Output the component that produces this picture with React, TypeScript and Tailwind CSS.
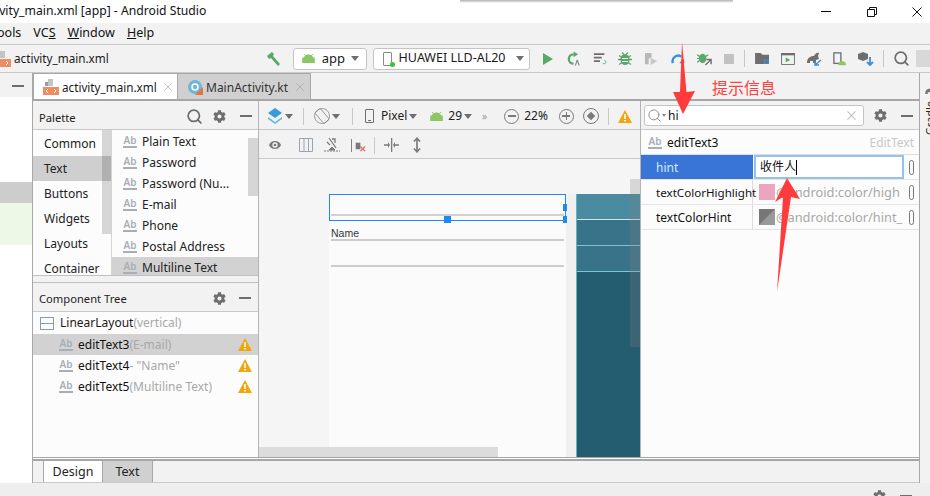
import { FaCog } from "react-icons/fa";
import { Search, Eye, MoveVertical } from "lucide-react";

const palette = ["Plain Text", "Password", "Password (Nu...", "E-mail", "Phone", "Postal Address", "Multiline Text"];
const groups = ["Common", "Text", "Buttons", "Widgets", "Layouts", "Container"];

const AbIcon = () => (
  <span className="flex w-[14px] shrink-0 flex-col items-center border-b-2 border-[#a7aeb8] text-[10px] leading-[11px] font-semibold text-[#a7aeb8]">
    Ab
  </span>
);

const Droid = ({ className = "" }: { className?: string }) => (
  <svg viewBox="0 0 14 10" className={className} fill="#8cc665">
    <path d="M0 4h14v6H0zM2 4c0-2 2-3.500 5-3.500S12 2 12 4z" />
    <path d="M2 0l2 2M12 0l-2 2" stroke="#8cc665" strokeWidth="1" />
  </svg>
);

const Caret = () => <span className="ml-[2px] h-0 w-0 border-x-[4px] border-t-[5px] border-x-transparent border-t-[#6e6e6e]" />;

const Cross = ({ className = "", color = "#c0c0c0", width = 1.2 }: { className?: string; color?: string; width?: number }) => (
  <svg viewBox="0 0 10 10" className={className} fill="none" stroke={color} strokeWidth={width}>
    <path d="M.500.500l9 9M9.500.500l-9 9" />
  </svg>
);

const Warn = ({ className = "" }: { className?: string }) => (
  <svg viewBox="0 0 14 13" className={`h-[13px] w-[14px] shrink-0 ${className}`}>
    <path d="M7 0l7 13H0z" fill="#f2a60d" />
    <path d="M6.200 4h1.600v5H6.200zM6.200 10h1.600v1.600H6.200z" fill="#fff" />
  </svg>
);

const Gear = () => <FaCog className="h-[13px] w-[13px] text-[#6e6e6e]" />;
const Dash = () => <span className="h-[2px] w-[12px] bg-[#6e6e6e]" />;

const XmlIcon = ({ className = "" }: { className?: string }) => (
  <svg viewBox="0 0 16 16" className={`h-[16px] w-[16px] shrink-0 ${className}`}>
    <path d="M5 0h5v7H5z" fill="#c4c4c4" />
    <path d="M2 3h3v4H2z" fill="#9c9c9c" />
    <path d="M0 8h16v8H0z" fill="#f08c62" />
    <path d="M5 10l-2 2 2 2M11 10l2 2-2 2" stroke="#fff" fill="none" />
  </svg>
);

const TopToolbar = () => (
  <div className="flex h-[29px] items-center border-y border-[#c9c9c9] bg-[#f2f2f2] text-[12px] text-[#1a1a1a]">
    <XmlIcon className="ml-[-5px]" />
    <span className="ml-[3px] w-[95px] text-[11.700px]">activity_main.xml</span>
    <svg viewBox="0 0 16 16" className="ml-[157px] h-[16px] w-[16px]">
      <path d="M1 5l5-4 2 2-1 2 7 8-2 2-7-8-2 1z" fill="#59a869" />
    </svg>
    <div className="ml-[11px] flex h-[22px] w-[74px] items-center rounded-[3px] border border-[#c4c4c4] bg-white pl-[8px]">
      <Droid className="h-[9px] w-[13px]" />
      <span className="ml-[7px] text-[13px]">app</span>
      <span className="ml-[4px] flex"><Caret /></span>
    </div>
    <div className="ml-[6px] flex h-[22px] w-[158px] items-center rounded-[3px] border border-[#c4c4c4] bg-white pl-[9px] whitespace-nowrap">
      <span className="relative h-[14px] w-[9px] rounded-[1px] border border-[#8a8a8a]">
        <span className="absolute top-[9px] left-[6px] h-[5px] w-[5px] rounded-full bg-[#3bc43b]" />
      </span>
      <span className="ml-[7px] text-[12.500px]">HUAWEI LLD-AL20</span>
      <span className="ml-[8px] flex"><Caret /></span>
    </div>
    <div className="ml-[12px] flex items-center gap-[11.700px]">
      <svg viewBox="0 0 12 14" className="h-[14px] w-[12px]"><path d="M1 1l10 6-10 6z" fill="#59a869" /></svg>
      <svg viewBox="0 0 16 16" className="h-[16px] w-[15px]"><path d="M8 3a5 5 0 1 0 0 10" stroke="#59a869" strokeWidth="2.500" fill="none" /><path d="M8 0l5 3-5 3z" fill="#59a869" /><path d="M10 15l2-6 2 6" stroke="#6e6e6e" fill="none" /></svg>
      <svg viewBox="0 0 16 16" className="h-[15px] w-[14px]"><path d="M1 2h12v2H1zM1 6h9v2H1zM1 10h7v2H1z" fill="#6e6e6e" /><path d="M11 13a2 2 0 1 0 2-3" stroke="#59a869" fill="none" /></svg>
      <svg viewBox="0 0 14 14" className="h-[15px] w-[14px]"><ellipse cx="7" cy="8" rx="4.500" ry="5.500" fill="#59a869" /><path d="M1 4l3 2M13 4l-3 2M0 8h3M14 8h-3M1 13l3-2M13 13l-3-2M4 1l2 2M10 1L8 3" stroke="#59a869" strokeWidth="1.300" /><path d="M4 7h6M4 10h6" stroke="#fff" /></svg>
      <svg viewBox="0 0 16 16" className="h-[15px] w-[15px]"><path d="M1 2h7v5l-3 1v6H1z" fill="#b8b8b8" /><path d="M7 7l7 4-7 4z" fill="#c8c8c8" /></svg>
      <svg viewBox="0 0 16 16" className="h-[15px] w-[15px]"><path d="M2 13a6 6 0 0 1 9-7" stroke="#3a8fd6" strokeWidth="2.500" fill="none" /><path d="M14 13a6 6 0 0 0-1-5l-4 5z" fill="#6e6e6e" /></svg>
      <svg viewBox="0 0 16 16" className="h-[15px] w-[15px]"><ellipse cx="6" cy="8" rx="4" ry="5" fill="#59a869" /><path d="M0 4l3 2M0 8h3M0 12l3-2M12 4l-3 2" stroke="#59a869" strokeWidth="1.300" /><path d="M9 15l5-5M10 9h5v5" stroke="#6e6e6e" strokeWidth="1.500" fill="none" /></svg>
      <span className="h-[10px] w-[10px] bg-[#c2c2c2]" />
    </div>
    <span className="mx-[10px] h-[17px] w-px bg-[#c8c8c8]" />
    <div className="flex items-center gap-[11px]">
      <svg viewBox="0 0 16 14" className="h-[13px] w-[15px]"><path d="M0 1h6l2 2h7v10H0z" fill="#6e6e6e" /><path d="M9 8h3v2H9zM13 8h2v2h-2zM9 11h3v2H9zM13 11h2v2h-2z" fill="#3a8fd6" /></svg>
      <svg viewBox="0 0 15 13" className="h-[12px] w-[14px]"><path d="M.500.500h14v12H.500z" fill="none" stroke="#6e6e6e" /><path d="M0 0h15v2.500H0z" fill="#6e6e6e" /><path d="M5 5l5 2.500L5 10z" fill="#59a869" /></svg>
      <svg viewBox="0 0 16 16" className="h-[16px] w-[16px]"><path d="M1 12c0-5 3-7 7-7 1-2 3-4 5-3l-1 3 1 3-3 1v3H7v-2H4v2z" fill="#6e6e6e" /><path d="M15 9l-6 5M9 10v4h4" stroke="#3a8fd6" strokeWidth="1.500" fill="none" /></svg>
      <svg viewBox="0 0 16 16" className="h-[16px] w-[14px]"><rect x="1" y="1" width="8" height="12" fill="none" stroke="#6e6e6e" strokeWidth="1.500" /><path d="M6 15a4.500 4.500 0 0 1 9 0z" fill="#8cc665" /></svg>
      <svg viewBox="0 0 16 16" className="h-[16px] w-[16px]"><path d="M5 1l5 2v5l-5 2-5-2V3z" fill="#6e6e6e" /><path d="M12 6v8M9 11l3 3 3-3" stroke="#3a8fd6" strokeWidth="1.800" fill="none" /></svg>
    </div>
    <span className="mx-[9px] h-[17px] w-px bg-[#c8c8c8]" />
    <Search className="h-[17px] w-[17px] text-[#6e6e6e]" strokeWidth={2.500} />
    <span className="ml-[6px] h-[17px] w-[14px] bg-[#d8d8d8]" />
  </div>
);

const EditorTabs = () => (
  <div className="flex h-[28px] border-b-2 border-[#a6a6a6] bg-[#f2f2f2] text-[12px]">
    <div className="flex h-[26px] w-[145px] items-center border-x border-t border-[#a8a8a8] bg-white pl-[9px] text-[#1a1a1a]">
      <XmlIcon />
      <span className="ml-[3px] w-[95px] pt-[2px] text-[11.700px]">activity_main.xml</span>
      <Cross className="ml-[7px] h-[8px] w-[8px]" />
    </div>
    <div className="flex h-[26px] w-[133px] items-center border-t border-r border-[#a8a8a8] bg-[#d0d0d0] pl-[9px] text-[#333]">
      <svg viewBox="0 0 16 16" className="h-[16px] w-[16px]">
        <circle cx="8" cy="8" r="7" fill="#6fb5d6" />
        <circle cx="8" cy="8" r="3" fill="none" stroke="#fff" strokeWidth="1.500" />
        <path d="M8 16l8-8v8z" fill="#e8743b" />
      </svg>
      <span className="ml-[3px] pt-[2px]">MainActivity.kt</span>
      <Cross className="ml-[8px] h-[8px] w-[8px]" color="#b0b0b0" />
    </div>
  </div>
);

const PalettePanel = () => (
  <div className="flex h-[175px] flex-col border-b border-[#c0c0c0]">
    <div className="flex h-[29px] shrink-0 items-center border-b border-[#c9c9c9] bg-[#f2f2f2] pt-[2px] pl-[6px]">
      <span className="mt-[4px] text-[11.200px]">Palette</span>
      <Search className="ml-[110px] h-[17px] w-[17px] text-[#6e6e6e]" strokeWidth={2.500} />
      <span className="ml-[10px] flex"><Gear /></span>
      <span className="ml-[14px] flex"><Dash /></span>
    </div>
    <div className="flex min-h-0 flex-1 bg-[#fcfcfc]">
      <div className="relative w-[79px] shrink-0 overflow-hidden border-r border-[#d4d4d4] pt-[1px]">
        {groups.map((g) => (
          <div key={g} className={`flex h-[25px] items-center pl-[11px] ${g === "Text" ? "bg-[#cfcfcf]" : ""}`}>
            {g}
          </div>
        ))}
        <span className="absolute top-0 right-0 h-[104px] w-[9px] bg-black/15" />
      </div>
      <div className="relative min-w-0 flex-1 overflow-hidden pt-[1px]">
        {palette.map((p) => (
          <div key={p} className={`flex h-[21px] items-center gap-[5px] pl-[11px] ${p === "Multiline Text" ? "bg-[#d2d2d2]" : ""}`}>
            <AbIcon />
            <span className="pt-[1px]">{p}</span>
          </div>
        ))}
        <span className="absolute top-[8px] right-0 h-[58px] w-[10px] bg-black/15" />
      </div>
    </div>
  </div>
);

const TreePanel = () => (
  <div className="flex min-h-0 flex-1 flex-col">
    <div className="h-[7px] shrink-0 border-b border-[#c0c0c0] bg-[#f2f2f2]" />
    <div className="flex h-[29px] shrink-0 items-center border-b border-[#c9c9c9] bg-[#f2f2f2] pt-[2px] pl-[6px]">
      <span className="mt-[3px] text-[11.200px]">Component Tree</span>
      <span className="ml-[86px] flex"><Gear /></span>
      <span className="ml-[13px] flex"><Dash /></span>
    </div>
    <div className="flex-1 bg-[#fcfcfc]">
      <div className="flex h-[22px] items-center pl-[7px]">
        <span className="flex h-[13px] w-[14px] flex-col justify-center border border-[#8a9bb0]"><span className="h-px bg-[#8a9bb0]" /></span>
        <span className="ml-[6px] text-[#1a1a1a]">LinearLayout</span>
        <span className="text-[#a8a8a8]">(vertical)</span>
      </div>
      {[
        { id: "editText3", rest: "(E-mail)" },
        { id: "editText4", rest: '- "Name"' },
        { id: "editText5", rest: "(Multiline Text)" },
      ].map((r) => (
        <div key={r.id} className={`flex h-[21px] items-center pl-[26px] ${r.id === "editText3" ? "bg-[#d2d2d2]" : ""}`}>
          <AbIcon />
          <span className="ml-[5px] text-[#111]">{r.id}</span>
          <span className="text-[#a8a8a8]">{r.rest}</span>
          <Warn className="mr-[6px] ml-auto" />
        </div>
      ))}
    </div>
  </div>
);

const DesignToolbar = () => (
  <>
    <div className="flex h-[29px] shrink-0 items-center border-b border-[#c9c9c9] bg-[#f2f2f2] pt-[2px] pl-[8px]">
      <svg viewBox="0 0 16 16" className="h-[16px] w-[16px]">
        <path d="M8 0l7 5-7 5-7-5z" fill="#3a9ad9" />
        <path d="M1 9l7 5 7-5v2l-7 5-7-5z" fill="#6cb5e3" />
      </svg>
      <Caret />
      <span className="mx-[10px] h-[17px] w-px bg-[#c8c8c8]" />
      <svg viewBox="0 0 16 16" className="h-[16px] w-[16px]" fill="none" stroke="#8a8a8a" strokeWidth="0.800">
        <circle cx="8" cy="8" r="7.500" />
        <rect x="4.500" y="1" width="7" height="14" rx="1" transform="rotate(-40 8 8)" />
      </svg>
      <Caret />
      <span className="mx-[12px] h-[17px] w-px bg-[#c8c8c8]" />
      <span className="flex h-[14px] w-[9px] items-end justify-center rounded-[1px] border border-[#6e6e6e] pb-px"><span className="h-px w-[3px] bg-[#6e6e6e]" /></span>
      <span className="ml-[7px]">Pixel</span>
      <Caret />
      <Droid className="ml-[13px] h-[9px] w-[13px]" />
      <span className="ml-[5px]">29</span>
      <Caret />
      <span className="ml-[10px] text-[10px] text-[#999]">»</span>
      <span className="ml-[17px] flex h-[15px] w-[15px] items-center justify-center rounded-full border-[1.500px] border-[#7a7a7a]"><span className="h-[1.500px] w-[8px] bg-[#7a7a7a]" /></span>
      <span className="ml-[5px]">22%</span>
      <span className="relative ml-[11px] flex h-[15px] w-[15px] items-center justify-center rounded-full border-[1.500px] border-[#7a7a7a]">
        <span className="h-[1.500px] w-[8px] bg-[#7a7a7a]" />
        <span className="absolute h-[8px] w-[1.500px] bg-[#7a7a7a]" />
      </span>
      <span className="ml-[9px] flex h-[16px] w-[16px] items-center justify-center rounded-full border-[1.500px] border-[#7a7a7a]"><span className="h-[6px] w-[6px] rotate-45 bg-[#7a7a7a]" /></span>
      <span className="mx-[9px] h-[17px] w-px bg-[#c8c8c8]" />
      <Warn />
    </div>
    <div className="flex h-[29px] shrink-0 items-center border-b border-[#c9c9c9] bg-[#f2f2f2] pt-[2px] pl-[8px]">
      <Eye className="h-[16px] w-[16px] fill-[#7a7a7a] text-[#f2f2f2]" />
      <svg viewBox="0 0 14 14" className="ml-[16px] h-[14px] w-[14px]" fill="none" stroke="#9aa5b1">
        <path d="M.500.500h13v13H.500zM5 .500v13M9.500 .500v13" />
      </svg>
      <svg viewBox="0 0 16 16" className="ml-[11px] h-[16px] w-[16px]" fill="none" stroke="#7a7a7a">
        <path d="M5 1l7 10M8 2h3v4M3 5l3 3" strokeWidth="1.300" />
        <path d="M0 14h16" strokeDasharray="2 1" />
        <path d="M5 13l3-3 3 3z" fill="#7a7a7a" />
      </svg>
      <svg viewBox="0 0 16 16" className="ml-[11px] h-[15px] w-[15px]">
        <path d="M.500 1v14" stroke="#7a7a7a" />
        <path d="M5 5h5v7H5z" fill="#7a7a7a" />
        <path d="M10 9l5 5M15 9l-5 5" stroke="#e86a6a" strokeWidth="1.500" />
      </svg>
      <span className="mx-[8px] h-[17px] w-px bg-[#c8c8c8]" />
      <svg viewBox="0 0 15 14" className="ml-[1px] h-[14px] w-[15px]" fill="#7a7a7a">
        <path d="M7 0h1.300v14H7zM0 6.300h4V4l2 3-2 3V7.700H0zM15 6.300h-4V4L9 7l2 3V7.700h4z" />
      </svg>
      <MoveVertical className="ml-[10px] h-[16px] w-[16px] text-[#7a7a7a]" strokeWidth={2.500} />
    </div>
  </>
);

const Canvas = () => (
  <div className="relative flex min-h-0 flex-1 overflow-hidden bg-[#f5f5f5] pt-[35px] pl-[70px]">
    <div className="relative h-full w-[237px] shrink-0 bg-[#fbfbfb]">
      <div className="h-[27px] border border-[#1e88f5]">
        <div className="mx-[1px] mt-[19px] h-[2px] bg-[#d0d0d0]" />
      </div>
      <div className="mx-[2px] h-[20px] border-b-2 border-[#cccccc] pt-[6px] font-['Liberation_Sans',sans-serif] text-[10.500px] leading-[12px] text-[#333]">Name</div>
      <div className="mx-[2px] h-[26px] border-b-2 border-[#cccccc]" />
      <span className="absolute top-[10px] right-[-1px] h-[7px] w-[4px] bg-[#1e88f5]" />
      <span className="absolute top-[22px] left-[115px] h-[7px] w-[7px] bg-[#1e88f5]" />
      <span className="absolute top-[22px] right-[-1px] h-[7px] w-[4px] bg-[#1e88f5]" />
    </div>
    <div className="w-[10px] shrink-0 bg-[#f0f0f0]" />
    <div className="h-full flex-1 border-l border-[#5fb5c8] bg-[#245c70]">
      <div className="h-[26px] border-b border-[#cfe8ee] bg-[#4a8ba0]" />
      <div className="h-[26px] border-b border-[#7cc4d8] bg-[#38738a]" />
      <div className="h-[26px] border-b border-[#7cc4d8] bg-[#38738a]" />
    </div>
    <span className="absolute bottom-0 left-0 h-[10px] w-[239px] bg-[#dcdcdc]" />
    <span className="absolute top-[20px] right-0 h-[168px] w-[10px] bg-[#808080]/25" />
  </div>
);

const Pill = () => <span className="my-auto ml-[5px] h-[15px] w-[5px] rounded-[3px] border border-[#777]" />;

const AttrPanel = () => (
  <div className="flex w-[279px] shrink-0 flex-col border-l border-[#b4b4b4] bg-[#fcfcfc]">
    <div className="flex h-[29px] shrink-0 items-center border-b border-[#c9c9c9] bg-[#f2f2f2] pl-[3px]">
      <div className="flex h-[21px] w-[220px] items-center rounded-[3px] border border-[#c4c4c4] bg-white pl-[2px]">
        <Search className="h-[15px] w-[15px] text-[#8a8a8a]" strokeWidth={1.500} />
        <span className="h-0 w-0 border-x-[2.500px] border-t-[3px] border-x-transparent border-t-[#8a8a8a]" />
        <span className="ml-[2px] pt-[1px] text-[#111]">hi</span>
        <Cross className="mr-[7px] ml-auto h-[9px] w-[9px]" />
      </div>
      <span className="mt-[1px] ml-[10px] flex"><Gear /></span>
      <span className="mt-[1px] ml-[14px] flex"><Dash /></span>
    </div>
    <div className="flex h-[25px] shrink-0 items-center border-b border-[#dedede] pt-[1px] pl-[7px]">
      <AbIcon />
      <span className="ml-[5px] pt-[1px] text-[#111]">editText3</span>
      <span className="mr-[5px] ml-auto pt-[1px] text-[#c8c8c8]">EditText</span>
    </div>
    <div className="flex h-[25px] shrink-0 border-b border-[#e4e4e4]">
      <div className="flex w-[112px] items-center bg-[#3875d7] pt-[1px] pl-[15px] text-[#d8e6f8]">hint</div>
      <div className="ml-[1px] flex w-[150px] items-center border-2 border-[#94c2ee] bg-white pl-[4px] text-[#111]">
        收件人<span className="h-[15px] w-px bg-black" />
      </div>
      <Pill />
    </div>
    <div className="flex h-[25px] shrink-0 border-b border-[#e4e4e4]">
      <div className="flex w-[112px] items-center border-r border-[#dcdcdc] pt-[1px] pl-[15px] text-[11.600px] whitespace-nowrap text-[#111]">textColorHighlight</div>
      <div className="flex w-[151px] items-center overflow-hidden pl-[6px] text-[12.800px] whitespace-nowrap text-[#a8a8a8]">
        <span className="h-[16px] w-[16px] shrink-0 bg-[#eda4be]" />
        <span className="ml-[1px] pt-[1px]">@android:color/high</span>
      </div>
      <Pill />
    </div>
    <div className="flex h-[25px] shrink-0 border-b border-[#e4e4e4]">
      <div className="flex w-[112px] items-center border-r border-[#dcdcdc] pt-[1px] pl-[15px] text-[#111]">textColorHint</div>
      <div className="flex w-[151px] items-center overflow-hidden pl-[6px] text-[12.800px] whitespace-nowrap text-[#a8a8a8]">
        <svg viewBox="0 0 16 16" className="h-[16px] w-[16px] shrink-0">
          <path d="M0 0h16v16H0z" fill="#999" />
          <path d="M0 0h16L0 16z" fill="#777" />
        </svg>
        <span className="ml-[1px] pt-[1px]">@android:color/hint_</span>
      </div>
      <Pill />
    </div>
  </div>
);

const Arrows = () => (
  <svg viewBox="0 0 930 496" className="pointer-events-none absolute inset-0 h-[496px] w-[930px]">
    <path d="M682 42L686.500 92L695 91L683 114L673 92L680 92Z" fill="#ff3b3b" />
    <path d="M787 178L800 199L791 197L777 292L783 197L775 202Z" fill="#ff3b3b" />
  </svg>
);

export default function App() {
  return (
    <div className="relative flex h-[496px] w-[930px] flex-col overflow-hidden bg-[#f2f2f2] font-['Noto_Sans','Noto_Sans_CJK_SC',sans-serif] text-[12px] text-[#222]">
      <div className="flex h-[23px] shrink-0 items-center bg-white text-[12.200px] text-[#111]">
        <span className="ml-[-4px]">ivity_main.xml [app] - Android Studio</span>
        <div className="ml-auto flex items-center">
          <span className="h-px w-[10px] bg-black" />
          <svg viewBox="0 0 10 10" className="ml-[36px] h-[10px] w-[10px]" fill="none" stroke="#111">
            <path d="M.500 2.500h7v7h-7zM2.500 2.500v-2h7v7h-2" />
          </svg>
          <Cross className="mr-[8px] ml-[35px] h-[10px] w-[10px]" color="#111" width={1} />
        </div>
      </div>

      <div className="flex h-[21px] shrink-0 items-center gap-[12px] text-[12.500px] text-[#111]">
        <span className="ml-[-3px]">ools</span>
        <span>VC<span className="underline">S</span></span>
        <span><span className="underline">W</span>indow</span>
        <span><span className="underline">H</span>elp</span>
      </div>

      <TopToolbar />

      <div className="flex min-h-0 flex-1">
        <div className="flex w-[33px] shrink-0 flex-col border-r border-[#a8a8a8] bg-white">
          <div className="flex h-[24px] shrink-0 items-center justify-end bg-[#f2f2f2] pt-[2px] pr-[8px]"><Dash /></div>
          <div className="h-[85px] shrink-0" />
          <div className="h-[21px] shrink-0 bg-[#cdcdcd]" />
          <div className="h-[42px] shrink-0 bg-[#eef8e6]" />
        </div>

        <div className="flex w-[887px] shrink-0 flex-col border-r border-[#a8a8a8]">
          <EditorTabs />
          <div className="flex min-h-0 flex-1 border-b border-[#a6a6a6]">
            <div className="flex w-[226px] shrink-0 flex-col border-r border-[#b4b4b4]">
              <PalettePanel />
              <TreePanel />
            </div>
            <div className="flex min-w-0 flex-1 flex-col">
              <DesignToolbar />
              <Canvas />
            </div>
            <AttrPanel />
          </div>
          <div className="h-[3px] shrink-0 border-b-2 border-[#a6a6a6] bg-white" />
          <div className="flex h-[22px] shrink-0 border-b border-[#c9c9c9] pl-[10px]">
            <div className="flex w-[59px] items-center justify-center border-l border-[#a8a8a8] bg-white pt-[1px] text-[12.500px]">Design</div>
            <div className="flex w-[51px] items-center justify-center border-x border-[#a8a8a8] bg-[#d0d0d0] pt-[1px] text-[12.500px]">Text</div>
          </div>
        </div>

        <div className="flex flex-1 flex-col items-start bg-[#f2f2f2] pt-[14px] pl-[5px]">
          <svg viewBox="0 0 10 8" className="h-[7px] w-[9px] shrink-0" fill="#777">
            <path d="M0 8c0-4 2-6 5-6 1-1 3-2 5-1v3l-2 1v3H6V6H3v2z" />
          </svg>
          <span className="mt-[7px] rotate-180 text-[11px] leading-[9px] [writing-mode:vertical-rl]">Gradle</span>
        </div>
      </div>

      <div className="flex h-[13px] shrink-0 items-start justify-end gap-[14px] overflow-hidden bg-[#eeeeee] pt-[7px] pr-[18px]">
        <Gear />
        <span className="mt-[5px] flex"><Dash /></span>
      </div>

      <div className="absolute top-0 left-[460px] h-[3px] w-[273px] bg-gradient-to-b from-[#b0b0b0] to-white" />
      <Arrows />
      <span className="absolute top-[77px] left-[712px] text-[16px] leading-[22px] text-[#ff4040]">提示信息</span>
    </div>
  );
}
